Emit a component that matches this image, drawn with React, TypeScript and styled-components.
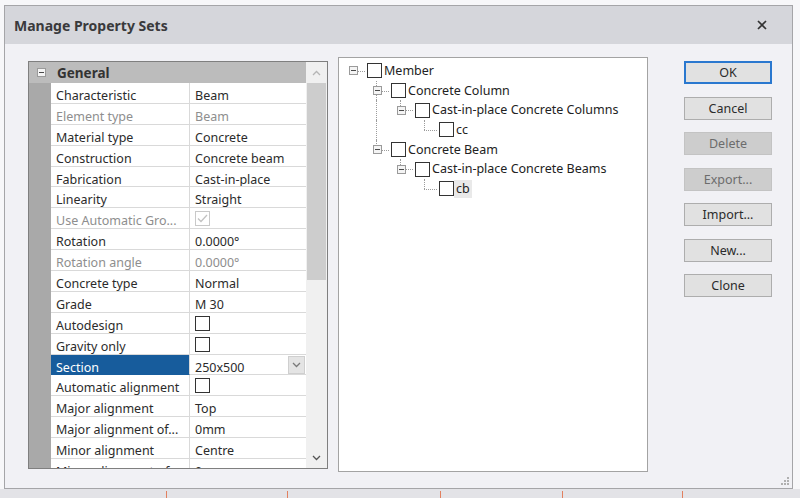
import * as React from 'react';
import styled, { createGlobalStyle, css } from 'styled-components';

const FONT = `"Noto Sans", "DejaVu Sans", sans-serif`;

const GlobalStyle = createGlobalStyle`
  body {
    margin: 0;
    background: #f7f7f9;
    font-family: ${FONT};
  }
`;

const Page = styled.div`
  width: 800px;
  height: 498px;
  display: flex;
  flex-direction: column;
  overflow: hidden;
`;

const Dialog = styled.div`
  position: relative;
  flex: none;
  box-sizing: border-box;
  width: 789px;
  height: 484px;
  margin: 5px 0 0 4px;
  border: 1px solid #a5a5a8;
  background: #f1f1f5;
  display: flex;
  flex-direction: column;
`;

const TitleBar = styled.div`
  flex: none;
  height: 38px;
  background: #d5d6db;
  display: flex;
  align-items: center;
  justify-content: space-between;
  padding-left: 9px;
`;

const Title = styled.div`
  font-size: 14px;
  font-weight: 700;
  color: #3a3a3c;
`;

const CloseButton = styled.div`
  width: 46px;
  height: 30px;
  margin-right: 7px;
  display: flex;
  align-items: center;
  justify-content: center;
`;

const Body = styled.div`
  flex: 1;
  display: flex;
  align-items: flex-start;
  padding: 13px 0 0 23px;
`;

/* property grid */

const Grid = styled.div`
  flex: none;
  box-sizing: border-box;
  width: 300px;
  height: 408px;
  margin-top: 4px;
  border: 1px solid #7f7f7f;
  background: #fff;
  display: flex;
  overflow: hidden;
`;

const GridTable = styled.div`
  flex: 1;
  display: flex;
  flex-direction: column;
  overflow: hidden;
`;

const HeaderRow = styled.div`
  flex: none;
  height: 21px;
  background: #bcbcbc;
  display: flex;
  align-items: center;
`;

const HeaderToggle = styled.div`
  width: 22px;
  display: flex;
  justify-content: center;
  padding-left: 1px;
`;

const ToggleBox = styled.div`
  box-sizing: border-box;
  width: 9px;
  height: 9px;
  background: #f4f4f4;
  border: 1px solid #9a9a9a;
  display: flex;
  align-items: center;
  justify-content: center;

  &::after {
    content: '';
    width: 5px;
    height: 1px;
    background: #4a4a4a;
  }
`;

const HeaderLabel = styled.div`
  font-size: 13.5px;
  font-weight: 700;
  color: #333;
  padding-left: 5px;
`;

const PropRow = styled.div`
  flex: none;
  height: 20.9px;
  display: flex;
`;

const Gutter = styled.div`
  flex: none;
  width: 22px;
  background: #a9a9a9;
`;

const Cell = styled.div<{ $disabled?: boolean }>`
  box-sizing: border-box;
  display: flex;
  align-items: center;
  padding: 5px 0 0 5px;
  border-bottom: 1px solid #d9d9d9;
  font-size: 12.5px;
  white-space: nowrap;
  overflow: hidden;
  color: ${p => (p.$disabled ? '#8e8e8e' : '#2b2b2b')};
`;

const NameCell = styled(Cell)<{ $selected?: boolean }>`
  flex: none;
  width: 139px;
  border-right: 1px solid #d9d9d9;
  ${p =>
    p.$selected &&
    css`
      background: #175c9c;
      color: #fff;
      border-bottom-color: #175c9c;
    `}
`;

const ValueCell = styled(Cell)`
  flex: 1;
  padding-right: 1px;
`;

const ValueText = styled.span`
  flex: 1;
`;

const CheckBox = styled.div<{ $size?: number; $faint?: boolean }>`
  box-sizing: border-box;
  flex: none;
  width: ${p => p.$size ?? 15}px;
  height: ${p => p.$size ?? 15}px;
  background: #fff;
  border: 1px solid ${p => (p.$faint ? '#c9c9c9' : '#333')};
  display: flex;
  align-items: center;
  justify-content: center;
`;

const GridCheck = styled(CheckBox)`
  margin-top: -4px;
`;

const DropButton = styled.div`
  box-sizing: border-box;
  width: 17px;
  height: 18px;
  margin-top: -5px;
  background: #e4e4e4;
  border: 1px solid #cfcfcf;
  display: flex;
  align-items: center;
  justify-content: center;
`;

const Scrollbar = styled.div`
  flex: none;
  width: 21px;
  background: #f0f0f0;
  display: flex;
  flex-direction: column;
`;

const ScrollArrow = styled.div`
  flex: none;
  height: 21px;
  display: flex;
  align-items: center;
  justify-content: center;
`;

const ScrollThumb = styled.div`
  flex: none;
  height: 197px;
  margin: 0 1px;
  background: #cdcdcd;
`;

const ScrollTrack = styled.div`
  flex: 1;
`;

/* tree */

const TreePanel = styled.div`
  flex: none;
  box-sizing: border-box;
  width: 310px;
  height: 415px;
  margin-left: 10px;
  border: 1px solid #a3a3a3;
  background: #fff;
  padding: 3px 0 0 1px;
`;

const TreeRow = styled.div`
  height: 19.7px;
  display: flex;
  align-items: center;
`;

const Guide = styled.div<{ $line?: boolean }>`
  position: relative;
  flex: none;
  width: 24px;
  align-self: stretch;

  ${p =>
    p.$line &&
    css`
      &::before {
        content: '';
        position: absolute;
        left: 12px;
        top: 0;
        bottom: 0;
        border-left: 1px dotted #9c9c9c;
      }
    `}
`;

const Branch = styled(Guide)<{ $up?: boolean; $down?: boolean }>`
  display: flex;
  align-items: center;
  justify-content: center;
  padding-left: 1px;

  &::before {
    content: '';
    position: absolute;
    left: 12px;
    top: ${p => (p.$up ? '0' : '50%')};
    bottom: ${p => (p.$down ? '0' : '50%')};
    border-left: 1px dotted #9c9c9c;
  }

  &::after {
    content: '';
    position: absolute;
    left: 12px;
    right: 0;
    top: 50%;
    border-top: 1px dotted #9c9c9c;
  }

  ${ToggleBox} {
    position: relative;
    z-index: 1;
  }
`;

const TreeLabel = styled.span<{ $selected?: boolean }>`
  font-size: 12.5px;
  color: #222;
  white-space: nowrap;
  padding: 0 2px 0 2px;
  line-height: 18px;
  background: ${p => (p.$selected ? '#e9e9e9' : 'transparent')};
`;

const TreeCheck = styled(CheckBox)`
  margin-left: 2px;
`;

/* buttons */

const ButtonColumn = styled.div`
  flex: none;
  width: 88px;
  margin: 4px 0 0 36px;
  display: flex;
  flex-direction: column;
  gap: 12.5px;
`;

const Button = styled.button<{ $primary?: boolean }>`
  box-sizing: border-box;
  height: 23px;
  padding: 0;
  font-family: ${FONT};
  font-size: 12.5px;
  color: #2b2b2b;
  background: #e1e1e1;
  border: 1px solid #adadad;

  ${p =>
    p.$primary &&
    css`
      border: 2px solid #2a78cf;
    `}

  &:disabled {
    background: #cdcdcd;
    border-color: #c3c3c3;
    color: #6c6c6c;
  }
`;

const Grip = styled.div`
  position: absolute;
  right: 2px;
  bottom: 2px;
  display: flex;
`;

/* the app behind the dialog */

const Backdrop = styled.div`
  flex: 1;
  background: #e3e3e7;
  display: flex;
  align-items: stretch;
  padding-top: 2px;
`;

const Tick = styled.div<{ $gap: number }>`
  flex: none;
  width: 1px;
  margin-left: ${p => p.$gap}px;
  background: #e2805f;
`;

type Prop = {
  name: string;
  value?: string;
  kind?: 'text' | 'check' | 'checked' | 'select';
  disabled?: boolean;
  selected?: boolean;
};

const properties: Prop[] = [
  { name: 'Characteristic', value: 'Beam' },
  { name: 'Element type', value: 'Beam', disabled: true },
  { name: 'Material type', value: 'Concrete' },
  { name: 'Construction', value: 'Concrete beam' },
  { name: 'Fabrication', value: 'Cast-in-place' },
  { name: 'Linearity', value: 'Straight' },
  { name: 'Use Automatic Gro...', kind: 'checked', disabled: true },
  { name: 'Rotation', value: '0.0000°' },
  { name: 'Rotation angle', value: '0.0000°', disabled: true },
  { name: 'Concrete type', value: 'Normal' },
  { name: 'Grade', value: 'M 30' },
  { name: 'Autodesign', kind: 'check' },
  { name: 'Gravity only', kind: 'check' },
  { name: 'Section', value: '250x500', kind: 'select', selected: true },
  { name: 'Automatic alignment', kind: 'check' },
  { name: 'Major alignment', value: 'Top' },
  { name: 'Major alignment of...', value: '0mm' },
  { name: 'Minor alignment', value: 'Centre' },
  { name: 'Minor alignment of...', value: '0mm' },
];

type Node = {
  label: string;
  guides: boolean[];
  up: boolean;
  down: boolean;
  expandable: boolean;
  selected?: boolean;
};

const tree: Node[] = [
  { label: 'Member', guides: [], up: false, down: false, expandable: true },
  { label: 'Concrete Column', guides: [false], up: true, down: true, expandable: true },
  { label: 'Cast-in-place Concrete Columns', guides: [false, true], up: true, down: false, expandable: true },
  { label: 'cc', guides: [false, true, false], up: true, down: false, expandable: false },
  { label: 'Concrete Beam', guides: [false], up: true, down: false, expandable: true },
  { label: 'Cast-in-place Concrete Beams', guides: [false, false], up: true, down: false, expandable: true },
  { label: 'cb', guides: [false, false, false], up: true, down: false, expandable: false, selected: true },
];

const buttons = [
  { label: 'OK', primary: true },
  { label: 'Cancel' },
  { label: 'Delete', disabled: true },
  { label: 'Export...', disabled: true },
  { label: 'Import...' },
  { label: 'New...' },
  { label: 'Clone' },
];

const ticks = [166, 287, 440, 562, 682];

const Chevron = ({ up, color = '#606060' }: { up?: boolean; color?: string }) => (
  <svg width="9" height="6" viewBox="0 0 9 6">
    <polyline
      points={up ? '1,5 4.5,1.5 8,5' : '1,1 4.5,4.5 8,1'}
      fill="none"
      stroke={color}
      strokeWidth="1.3"
    />
  </svg>
);

const CheckMark = () => (
  <svg width="11" height="9" viewBox="0 0 11 9">
    <polyline points="1,4.5 4,7.5 10,1" fill="none" stroke="#c2c2c2" strokeWidth="1.3" />
  </svg>
);

const renderValue = (p: Prop) => {
  switch (p.kind) {
    case 'check':
      return <GridCheck $size={15} />;
    case 'checked':
      return (
        <GridCheck $size={15} $faint>
          <CheckMark />
        </GridCheck>
      );
    case 'select':
      return (
        <>
          <ValueText>{p.value}</ValueText>
          <DropButton>
            <Chevron color="#7a7a7a" />
          </DropButton>
        </>
      );
    default:
      return <ValueText>{p.value}</ValueText>;
  }
};

export default function App() {
  let x = 0;
  return (
    <Page>
      <GlobalStyle />
      <Dialog>
        <TitleBar>
          <Title>Manage Property Sets</Title>
          <CloseButton>
            <svg width="10" height="10" viewBox="0 0 10 10">
              <path d="M1 1 L9 9 M9 1 L1 9" stroke="#333" strokeWidth="1.7" />
            </svg>
          </CloseButton>
        </TitleBar>

        <Body>
          <Grid>
            <GridTable>
              <HeaderRow>
                <HeaderToggle>
                  <ToggleBox />
                </HeaderToggle>
                <HeaderLabel>General</HeaderLabel>
              </HeaderRow>
              {properties.map(p => (
                <PropRow key={p.name}>
                  <Gutter />
                  <NameCell $disabled={p.disabled} $selected={p.selected}>
                    {p.name}
                  </NameCell>
                  <ValueCell $disabled={p.disabled}>{renderValue(p)}</ValueCell>
                </PropRow>
              ))}
            </GridTable>
            <Scrollbar>
              <ScrollArrow>
                <Chevron up color="#b5b5b5" />
              </ScrollArrow>
              <ScrollThumb />
              <ScrollTrack />
              <ScrollArrow>
                <Chevron color="#555" />
              </ScrollArrow>
            </Scrollbar>
          </Grid>

          <TreePanel>
            {tree.map(n => (
              <TreeRow key={n.label}>
                {n.guides.map((g, i) => (
                  <Guide key={i} $line={g} />
                ))}
                <Branch $up={n.up} $down={n.down}>
                  {n.expandable && <ToggleBox />}
                </Branch>
                <TreeCheck $size={15} />
                <TreeLabel $selected={n.selected}>{n.label}</TreeLabel>
              </TreeRow>
            ))}
          </TreePanel>

          <ButtonColumn>
            {buttons.map(b => (
              <Button key={b.label} $primary={b.primary} disabled={b.disabled}>
                {b.label}
              </Button>
            ))}
          </ButtonColumn>
        </Body>

        <Grip>
          <svg width="10" height="10" viewBox="0 0 10 10" fill="#b0b0b0">
            <rect x="7" y="1" width="2" height="2" />
            <rect x="4" y="4" width="2" height="2" />
            <rect x="7" y="4" width="2" height="2" />
            <rect x="1" y="7" width="2" height="2" />
            <rect x="4" y="7" width="2" height="2" />
            <rect x="7" y="7" width="2" height="2" />
          </svg>
        </Grip>
      </Dialog>

      <Backdrop>
        {ticks.map(t => {
          const gap = t - x;
          x = t + 1;
          return <Tick key={t} $gap={gap} />;
        })}
      </Backdrop>
    </Page>
  );
}
